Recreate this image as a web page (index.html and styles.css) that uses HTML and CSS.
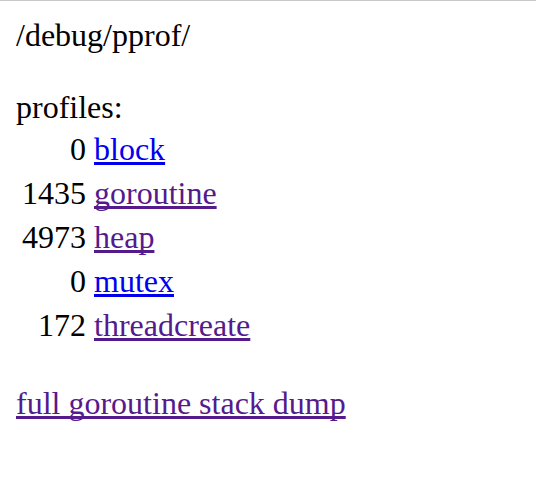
FILE: index.html
```
<!DOCTYPE html>
<html>
<head>
    <meta charset="UTF-8">
    <title>/debug/pprof/</title>
    <link rel="stylesheet" href="styles.css">
</head>
<body>
    <div class="pageTitle">/debug/pprof/</div>
    <br>
    <div class="sectionLabel">profiles:</div>
    <table class="profileTable">
        <tr><td class="count">0</td><td><a class="link" href="block?debug=1">block</a></td></tr>
        <tr><td class="count">1435</td><td><a class="link visited" href="goroutine?debug=1">goroutine</a></td></tr>
        <tr><td class="count">4973</td><td><a class="link visited" href="heap?debug=1">heap</a></td></tr>
        <tr><td class="count">0</td><td><a class="link" href="mutex?debug=1">mutex</a></td></tr>
        <tr><td class="count">172</td><td><a class="link visited" href="threadcreate?debug=1">threadcreate</a></td></tr>
    </table>
    <div class="fullDump">
        <a class="link visited" href="goroutine?debug=2">full goroutine stack dump</a>
    </div>
</body>
</html>
```

FILE: styles.css
```
html {
    border-top: 1px solid #c8c8c8;
    background-color: white;
}

body {
    margin: 16px;
    font-family: "Liberation Serif", "Times New Roman", serif;
    font-size: 32px;
    line-height: 36px;
    color: black;
}

.profileTable {
    border-spacing: 4px;
    font-size: 32px;
    line-height: 36px;
}

.profileTable td {
    padding: 2px;
}

.count {
    text-align: right;
}

.link {
    color: #0000ee;
    text-decoration: underline;
    text-decoration-skip-ink: none;
}

.link.visited {
    color: #551a8b;
}

.fullDump {
    margin-top: 36px;
}
```
